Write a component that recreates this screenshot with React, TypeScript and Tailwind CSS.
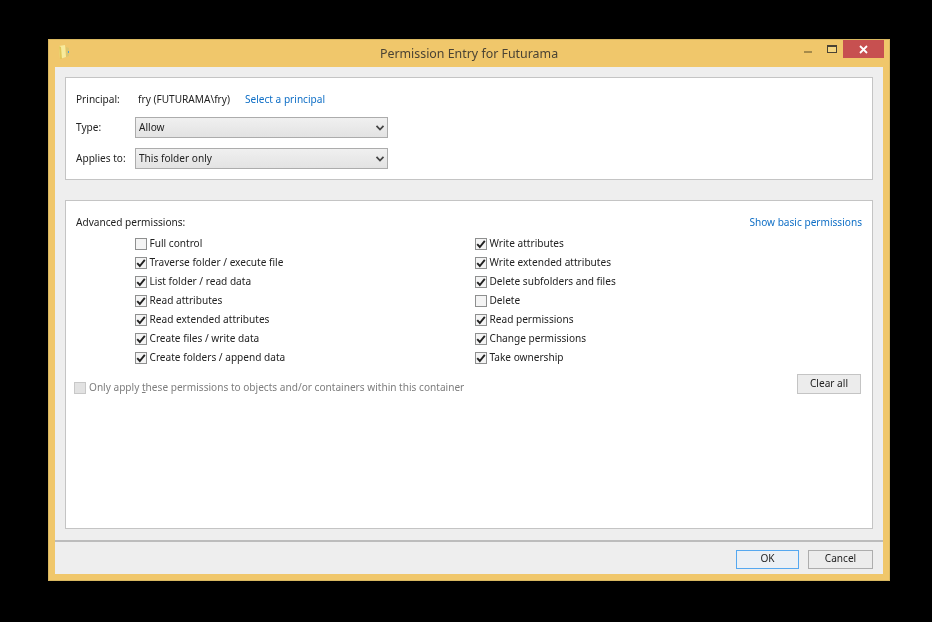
const left = [
  ["Full control", false],
  ["Traverse folder / execute file", true],
  ["List folder / read data", true],
  ["Read attributes", true],
  ["Read extended attributes", true],
  ["Create files / write data", true],
  ["Create folders / append data", true],
] as const;
const right = [
  ["Write attributes", true],
  ["Write extended attributes", true],
  ["Delete subfolders and files", true],
  ["Delete", false],
  ["Read permissions", true],
  ["Change permissions", true],
  ["Take ownership", true],
] as const;

function Check({ label, checked }: { label: string; checked: boolean }) {
  return (
    <div className="flex h-[19px] items-center">
      <div className="flex h-[12px] w-[12px] items-center justify-center border border-[#8e8f8f] bg-[#f4f4f4]">
        {checked && (
          <svg width="10" height="10" viewBox="0 0 10 10">
            <path d="M1.2 5.2 L3.8 8 L8.8 1.8" fill="none" stroke="#222" strokeWidth="1.9" />
          </svg>
        )}
      </div>
      <span className="ml-[2.5px] whitespace-nowrap">{label}</span>
    </div>
  );
}

function Select({ value }: { value: string }) {
  return (
    <div className="flex h-[21px] w-[253px] items-center justify-between border border-[#acacac] bg-gradient-to-b from-[#f0f0f0] to-[#e3e3e3] pl-[3px] pr-[2px]">
      <span>{value}</span>
      <svg width="10" height="8" viewBox="0 0 10 8">
        <path d="M1.5 1.8 L5 5.6 L8.5 1.8" fill="none" stroke="#444" strokeWidth="1.7" />
      </svg>
    </div>
  );
}

export default function App() {
  return (
    <div className="h-[622px] w-[932px] overflow-hidden bg-black pl-[48px] pt-[39px] font-['Noto_Sans',sans-serif] text-[10.1px] text-[#222222]">
      <div className="flex h-[542px] w-[842px] flex-col border border-[#d9b760] bg-[#f0c76b] px-[6px] pb-[6px] blur-[0.3px]">
        <div className="relative flex h-[27px] shrink-0 items-center justify-center">
          <svg className="absolute left-[2px] top-[4px]" width="14" height="17" viewBox="0 0 14 17">
            <path d="M2 2 L8 1 L9 13 L3 15 Z" fill="#f7eb9c" />
            <path d="M2 2 L4 3 L5 15 L3 15 Z" fill="#e2c758" />
            <path d="M9 3 L12 4 L12 12 L9 13 Z" fill="#dcc56e" />
            <rect x="11" y="7" width="1" height="2" fill="#4a9fd8" />
          </svg>
          <span className="translate-y-[1px] text-[12.4px] text-[#4a4334]">Permission Entry for Futurama</span>
          <div className="absolute right-[-1px] top-0 flex items-start">
            <div className="mr-[15px] mt-[11px] h-[2px] w-[8px] bg-[#a58a4a]" />
            <div className="mr-[6px] mt-[5px] h-[8px] w-[10px] border border-[#4a4334] border-t-[2px] bg-[#f5d680]" />
            <div className="flex h-[18px] w-[41px] items-center justify-center bg-[#c75050]">
              <svg width="9" height="9" viewBox="0 0 9 9">
                <path d="M1 1 L8 8 M8 1 L1 8" stroke="#fff" strokeWidth="1.8" />
              </svg>
            </div>
          </div>
        </div>

        <div className="flex min-h-0 flex-1 flex-col bg-[#eeeeee]">
          <div className="flex-1 px-[10px] pt-[10px]">
            <div className="h-[103px] border border-[#c4c4c4] bg-white px-[10px] pt-[12px]">
              <div className="flex h-[20px] items-center">
                <span className="w-[62px]">Principal:</span>
                <span>fry (FUTURAMA\fry)</span>
                <span className="ml-[15px] text-[#0f6fc6]">Select a principal</span>
              </div>
              <div className="mt-[7px] flex items-center">
                <span className="w-[59px]">Type:</span>
                <Select value="Allow" />
              </div>
              <div className="mt-[10px] flex items-center">
                <span className="w-[59px]">Applies to:</span>
                <Select value="This folder only" />
              </div>
            </div>

            <div className="mt-[20px] h-[329px] border border-[#c4c4c4] bg-white px-[10px] pt-[12px]">
              <div className="flex h-[19px] items-center justify-between">
                <span>Advanced permissions:</span>
                <span className="text-[#0f6fc6]">Show basic permissions</span>
              </div>
              <div className="mt-[2px] flex pl-[59px]">
                <div className="w-[340px]">
                  {left.map(([label, checked]) => (
                    <Check key={label} label={label} checked={checked} />
                  ))}
                </div>
                <div>
                  {right.map(([label, checked]) => (
                    <Check key={label} label={label} checked={checked} />
                  ))}
                </div>
              </div>
              <div className="mt-[7px] flex items-start justify-between">
                <div className="-ml-[2px] mt-[8px] flex h-[12px] items-center text-[#7d7d7d]">
                  <div className="h-[12px] w-[12px] border border-[#c8c8c8] bg-[#e2e2e2]" />
                  <span className="ml-[3px]">
                    Only apply <u>t</u>hese permissions to objects and/or containers within this container
                  </span>
                </div>
                <div className="mr-[1px] flex h-[20px] w-[64px] items-center justify-center border border-[#c4c4c4] bg-[#ececec]">
                  Clear all
                </div>
              </div>
            </div>
          </div>

          <div className="flex h-[34px] shrink-0 items-center justify-end gap-[9px] border-t-2 border-[#bcbcbc] pr-[10px] pt-[2px]">
            <div className="flex h-[19px] w-[63px] items-center justify-center border border-[#55a8f0] bg-[#ebf0f5]">OK</div>
            <div className="flex h-[19px] w-[65px] items-center justify-center border border-[#adadad] bg-[#ececec]">Cancel</div>
          </div>
        </div>
      </div>
    </div>
  );
}
